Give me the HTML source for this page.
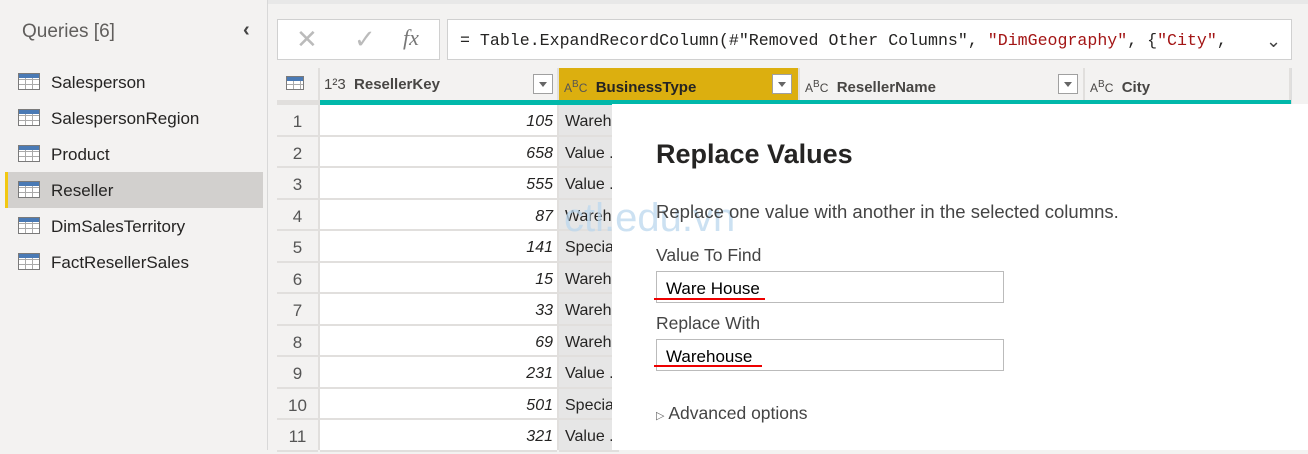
<!DOCTYPE html>
<html><head><style>
*{margin:0;padding:0;box-sizing:border-box}
body{width:1308px;height:450px;overflow:hidden;background:#f3f2f1;font-family:"Segoe UI","Liberation Sans",sans-serif;position:relative;color:#252423}
.a{position:absolute}
.left{left:0;top:0;width:268px;height:450px;background:#f3f2f1;border-right:1px solid #d8d8d8}
.q{position:absolute;left:18px;font-size:17px;color:#252423;height:36px;line-height:38px;padding-left:33px}
.ti{position:absolute;left:0;top:9px;width:22px;height:17px;border:1px solid #7a7a7a;background:
linear-gradient(#4a7ab5,#4a7ab5) 0 0/100% 4px no-repeat,
repeating-linear-gradient(90deg,transparent 0 6px,#aaa 6px 7px),
repeating-linear-gradient(0deg,transparent 0 4px,#aaa 4px 5px) #fff}
.box{background:#fff;border:1px solid #d0d0d0}
.cell{position:absolute;background:#fff;border-bottom:2px solid #e1dfdd;font-size:16px}
.hdr{position:absolute;top:68px;height:32px;background:#f3f2f1;font-weight:bold;font-size:15px;color:#484644;line-height:34px;border-right:2px solid #e1dfdd}
.dd{position:absolute;top:6px;width:20px;height:20px;background:#fff;border:1px solid #a0a0a0}
.dd:after{content:"";position:absolute;left:5px;top:7px;border:4px solid transparent;border-top:5px solid #666}
.teal{position:absolute;top:100px;height:5px;background:#01b8aa}
</style></head><body>
<div class="a" style="left:0;top:0;width:1308px;height:4px;background:#e8e8e8"></div>
<div class="a left">
<div class="a" style="left:22px;top:21px;font-size:19px;color:#605e5c">Queries [6]</div>
<div class="a" style="left:243px;top:19px;font-size:20px;color:#444;font-weight:bold">‹</div>
<div class="a" style="left:5px;top:172px;width:258px;height:36px;background:#d2d0ce;border-left:3px solid #f2c811"></div>
<div class="q" style="top:64px"><span class="ti"></span>Salesperson</div>
<div class="q" style="top:100px"><span class="ti"></span>SalespersonRegion</div>
<div class="q" style="top:136px"><span class="ti"></span>Product</div>
<div class="q" style="top:172px"><span class="ti"></span>Reseller</div>
<div class="q" style="top:208px"><span class="ti"></span>DimSalesTerritory</div>
<div class="q" style="top:244px"><span class="ti"></span>FactResellerSales</div>
</div>
<div class="a box" style="left:277px;top:19px;width:163px;height:41px;color:#bbb;font-size:26px">
<span class="a" style="left:18px;top:4px;font-weight:300">✕</span><span class="a" style="left:76px;top:4px">✓</span><span class="a" style="left:125px;top:5px;font-family:'Liberation Serif';font-style:italic;font-size:22px;color:#777">fx</span></div>
<div class="a box" style="left:447px;top:19px;width:845px;height:41px;font-family:'Liberation Mono',monospace;font-size:16.6px;line-height:42px;padding-left:12px;white-space:nowrap;overflow:hidden">= Table.ExpandRecordColumn(#"Removed Other Columns", <span style="color:#a31515">"DimGeography"</span>, {<span style="color:#a31515">"City"</span>,<span class="a" style="left:818px;top:0;font-family:'Liberation Sans';color:#444;font-size:18px;background:#fff;width:26px">⌄</span></div>
<div class="a" style="left:277px;top:68px;width:1020px;height:382px;background:#e1dfdd"></div>
<div class="hdr" style="left:277px;width:43px;"><span class="ti" style="left:9px;top:8px;width:18px;height:14px"></span></div>
<div class="hdr" style="left:320px;width:239px;padding-left:4px"><span style="font-weight:normal;font-size:15px">1²3</span>&nbsp; ResellerKey<span class="dd" style="left:213px"></span></div>
<div class="hdr" style="left:559px;width:241px;padding-left:5px;background:#dcaf0f;color:#252423"><span style="font-weight:normal;font-size:12px;color:#555">A<sup>B</sup>C</span>&nbsp; BusinessType<span class="dd" style="left:213px"></span></div>
<div class="hdr" style="left:800px;width:285px;padding-left:5px"><span style="font-weight:normal;font-size:12px">A<sup>B</sup>C</span>&nbsp; ResellerName<span class="dd" style="left:258px"></span></div>
<div class="hdr" style="left:1085px;width:206px;padding-left:5px"><span style="font-weight:normal;font-size:12px">A<sup>B</sup>C</span>&nbsp; City</div>
<div class="teal" style="left:320px;width:971px"></div>
<div class="a" style="left:1291px;top:68px;width:17px;height:382px;background:#f3f2f1;border-left:1px solid #ddd"></div>
<div id="rows"></div>
<script>
var v=[105,658,555,87,141,15,33,69,231,501,321],t=["Wareh","Value .","Value .","Wareh","Specia","Wareh","Wareh","Wareh","Value .","Specia","Value ."],h="";
for(var i=0;i<11;i++){var y=105+i*31.5;
h+='<div class="cell" style="left:277px;top:'+y+'px;width:41px;height:31.5px;background:#f3f2f1;text-align:center;line-height:34px;color:#555;font-size:17px">'+(i+1)+'</div>';
h+='<div class="cell" style="left:320px;top:'+y+'px;width:237px;height:31.5px;text-align:right;padding-right:4px;line-height:33px;font-style:italic">'+v[i]+'</div>';
h+='<div class="cell" style="left:559px;top:'+y+'px;width:60px;height:31.5px;background:#e6e6e6;padding-left:6px;line-height:33px;overflow:hidden;white-space:nowrap">'+t[i]+'</div>';}
document.getElementById('rows').innerHTML=h;
</script>
<div class="a" style="left:612px;top:104px;width:696px;height:346px;background:#fff"></div>
<div class="a" style="left:564px;top:196px;font-size:40px;color:#bcd8ee;opacity:.75;font-family:'Liberation Sans'">ctl.edu.vn</div>
<div class="a" style="left:656px;top:139px;font-size:27px;font-weight:600;color:#252423">Replace Values</div>
<div class="a" style="left:656px;top:201px;font-size:18.5px;color:#444">Replace one value with another in the selected columns.</div>
<div class="a" style="left:656px;top:245px;font-size:17.5px;color:#444">Value To Find</div>
<div class="a" style="left:656px;top:271px;width:348px;height:32px;border:1px solid #bbb;font-size:17px;padding-left:9px;line-height:33px;color:#000">Ware House</div>
<div class="a" style="left:654px;top:298px;width:111px;height:2px;background:#e00"></div>
<div class="a" style="left:656px;top:313px;font-size:17.5px;color:#444">Replace With</div>
<div class="a" style="left:656px;top:339px;width:348px;height:32px;border:1px solid #bbb;font-size:17px;padding-left:9px;line-height:33px;color:#000">Warehouse</div>
<div class="a" style="left:654px;top:365px;width:108px;height:2px;background:#e00"></div>
<div class="a" style="left:656px;top:403px;font-size:17.5px;color:#444"><span style="font-size:11px;color:#666">▷</span> Advanced options</div>
</body></html>
